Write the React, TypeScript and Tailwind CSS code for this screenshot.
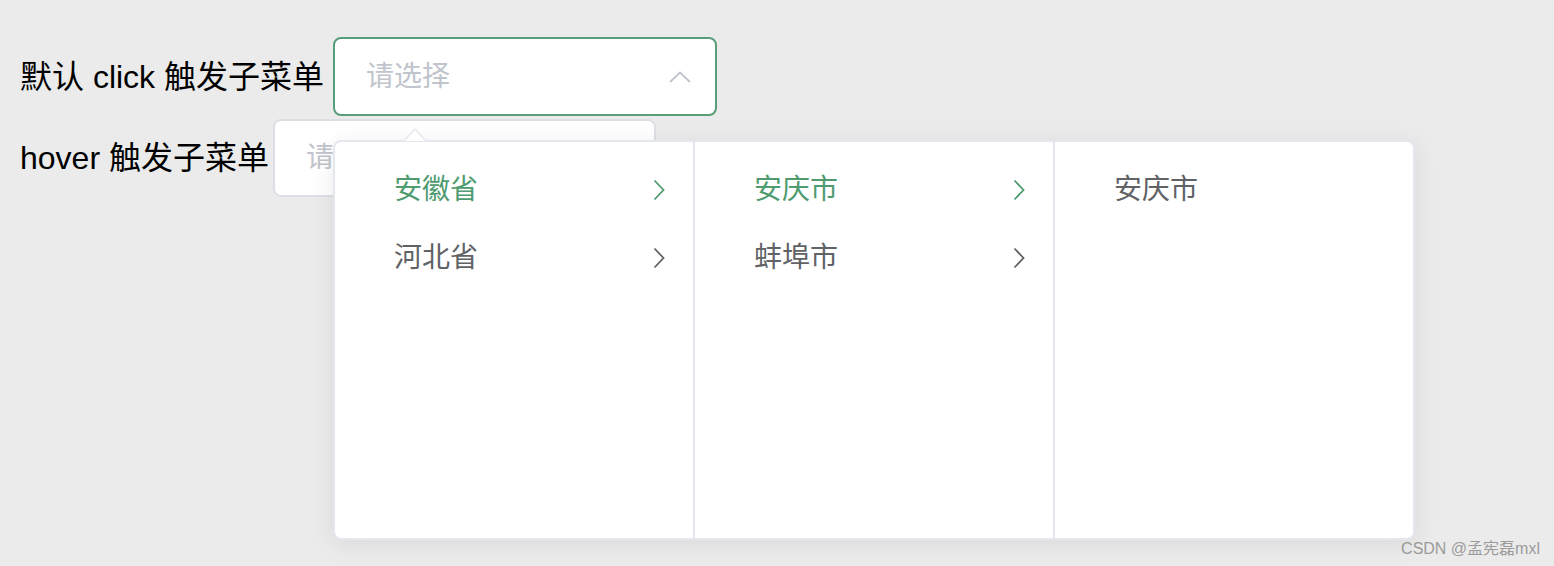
import React from "react";

const FONT = {
  fontFamily: '"Liberation Sans", "Noto Sans CJK SC", sans-serif',
};

type Node = { label: string; active?: boolean; hasChildren?: boolean };

const columns: Node[][] = [
  [
    { label: "安徽省", active: true, hasChildren: true },
    { label: "河北省", hasChildren: true },
  ],
  [
    { label: "安庆市", active: true, hasChildren: true },
    { label: "蚌埠市", hasChildren: true },
  ],
  [{ label: "安庆市" }],
];

function ChevronRight({ className }: { className?: string }) {
  return (
    <svg width="12" height="22" viewBox="0 0 12 22" fill="none" className={className}>
      <path d="M1.5 1.5 L10.5 11 L1.5 20.5" stroke="currentColor" strokeWidth="1.8" />
    </svg>
  );
}

function ChevronUp() {
  return (
    <svg width="22" height="12" viewBox="0 0 22 12" fill="none" className="text-[#c0c4cc]">
      <path d="M1 11 L11 1.5 L21 11" stroke="currentColor" strokeWidth="1.8" />
    </svg>
  );
}

function CascaderPanel({ nodes, last }: { nodes: Node[]; last?: boolean }) {
  return (
    <div
      className={`h-full pt-[14px] ${
        last ? "w-[358px]" : "w-[360px] border-r-2 border-[#e4e7ed]"
      }`}
    >
      {nodes.map((n) => (
        <div
          key={n.label}
          className={`h-[68px] flex items-center pl-[59px] pr-[28px] text-[28px] ${
            n.active ? "text-[#4e9b70]" : "text-[#606266]"
          }`}
        >
          <span className="flex-1">{n.label}</span>
          {n.hasChildren && <ChevronRight />}
        </div>
      ))}
    </div>
  );
}

export default function App() {
  return (
    <div
      className="relative w-[1554px] h-[566px] bg-[#ebebeb] overflow-hidden pt-[37px] pl-[20px]"
      style={FONT}
    >
      {/* ── click trigger ── */}
      <div className="flex items-center">
        <span className="w-[313px] shrink-0 text-[32px] text-black whitespace-pre">默认 click 触发子菜单</span>
        <div className="relative">
          <div className="w-[384px] h-[79px] bg-white border-2 border-[#5a9e78] rounded-[8px] flex items-center pl-[31px] pr-[24px]">
            <span className="flex-1 text-[28px] text-[#c0c4cc]">请选择</span>
            <ChevronUp />
          </div>

          {/* dropdown */}
          <div className="absolute left-0 top-[103px] z-10">
            <div className="absolute left-[70px] -top-[12px] w-0 h-0 border-l-[12px] border-r-[12px] border-b-[13px] border-l-transparent border-r-transparent border-b-[#e4e7ed]" />
            <div className="absolute left-[72px] -top-[10px] w-0 h-0 border-l-[10px] border-r-[10px] border-b-[11px] border-l-transparent border-r-transparent border-b-white" />
            <div className="flex w-[1082px] h-[400px] bg-white border-2 border-[#e4e7ed] rounded-[8px] shadow-[0_4px_24px_rgba(0,0,0,0.08)]">
              {columns.map((c, i) => (
                <CascaderPanel key={i} nodes={c} last={i === columns.length - 1} />
              ))}
            </div>
          </div>
        </div>
      </div>

      {/* ── hover trigger ── */}
      <div className="flex items-center mt-[3px]">
        <span className="w-[253px] shrink-0 text-[32px] text-black whitespace-pre">hover 触发子菜单</span>
        <div className="w-[383px] h-[78px] bg-white border-2 border-[#dcdfe6] rounded-[8px] flex items-center pl-[31px]">
          <span className="text-[28px] text-[#c0c4cc]">请选择</span>
        </div>
      </div>

      <div className="absolute right-[14px] bottom-[5px] text-[16px] text-[#9b9b9b]">
        CSDN @孟宪磊mxl
      </div>
    </div>
  );
}
